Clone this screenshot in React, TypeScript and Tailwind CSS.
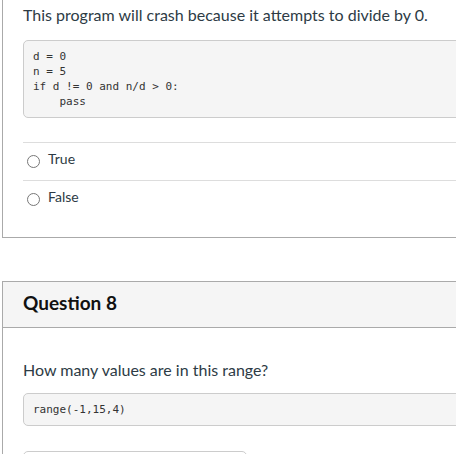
import React from "react";

const lato = { fontFamily: "Lato, 'Noto Sans', sans-serif" };
const mono = { fontFamily: "'DejaVu Sans Mono', 'Liberation Mono', monospace" };

function Radio({ label }: { label: string }) {
  return (
    <div className="flex h-[38px] items-center border-t border-[#dddddd] pb-[5px]">
      <span className="ml-[4px] mr-[8px] mt-[4px] inline-block h-[13px] w-[13px] rounded-full border border-[#777777] bg-white" />
      <span className="text-[14px] leading-[20px] text-[#2d3b45]">{label}</span>
    </div>
  );
}

export default function App() {
  return (
    <div className="h-[454px] w-[456px] overflow-hidden bg-white text-[#2d3b45]" style={lato}>
      <div className="ml-[2px] w-[500px] border-b border-l border-[#aaaaaa] pb-[19px] pl-[20px] pr-[20px]">
        <p className="pt-[3px] text-[16px] leading-[24px]">
          This program will crash because it attempts to divide by 0.
        </p>
        <pre
          className="mt-[13px] rounded-[5px] border border-[#cccccc] bg-[#f5f5f5] px-[9px] py-[8px] text-[11px] leading-[15px] text-[#333333]"
          style={mono}
        >
{`d = 0
n = 5
if d != 0 and n/d > 0:
    pass`}
        </pre>
        <div className="mt-[24px]">
          <Radio label="True" />
          <Radio label="False" />
        </div>
      </div>

      <div className="ml-[2px] mt-[43px] w-[500px] border-l border-t border-[#aaaaaa]">
        <div className="flex h-[46px] items-center border-b border-[#aaaaaa] bg-[#f5f5f5] px-[20px] pb-[4px]">
          <h2 className="text-[19px] font-bold leading-[24px] text-[#111111]">Question 8</h2>
        </div>
        <div className="pl-[20px] pr-[20px] pt-[30px]">
          <p className="text-[16px] leading-[24px]">How many values are in this range?</p>
          <pre
            className="mt-[11px] rounded-[5px] border border-[#cccccc] bg-[#f5f5f5] px-[9px] py-[8px] text-[11px] leading-[15px] text-[#333333]"
            style={mono}
          >
{`range(-1,15,4)`}
          </pre>
          <div className="mt-[25px] h-[34px] w-[224px] rounded-[5px] border border-[#cccccc] bg-white" />
        </div>
      </div>
    </div>
  );
}
